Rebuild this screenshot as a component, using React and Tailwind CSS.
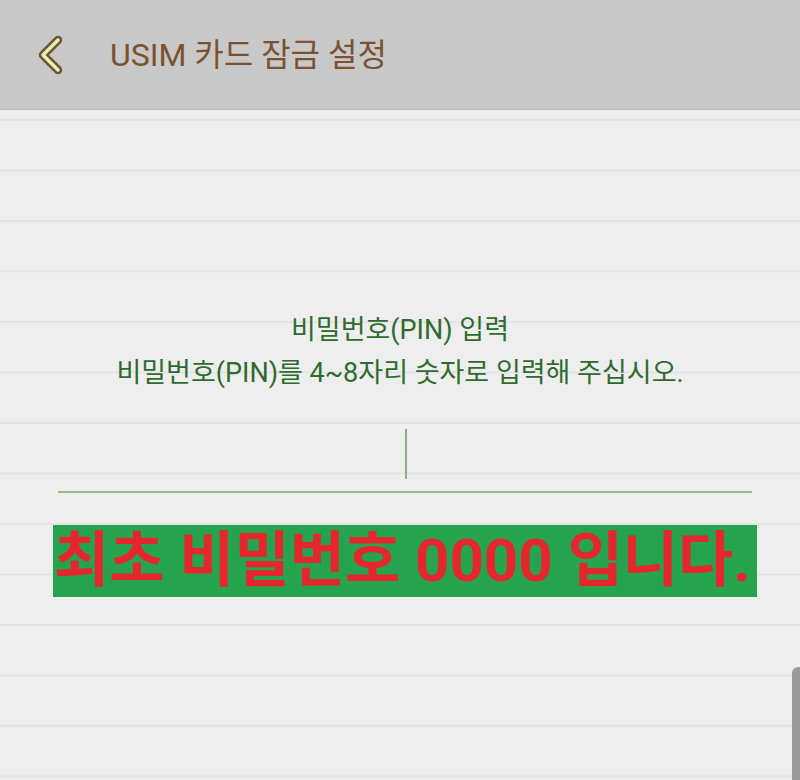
import React from 'react';

const font = { fontFamily: 'Roboto, "Noto Sans CJK KR", sans-serif' };

const BackChevron = () => (
    <svg width="34" height="40" viewBox="0 0 34 40" className="shrink-0">
        <polyline points="24,5 9,20 24,35" fill="none" stroke="#6e5433" strokeWidth="8.5" strokeLinecap="round" strokeLinejoin="round" />
        <polyline points="24,5 9,20 24,35" fill="none" stroke="#e8f1b4" strokeWidth="3.5" strokeLinecap="round" strokeLinejoin="round" />
    </svg>
);

export default function App() {
    return (
        <div className="w-[800px] h-[780px] overflow-hidden bg-[#eeeeee] relative" style={font}>
            {/* Header */}
            <div className="h-[110px] bg-[#c8c8c8] border-b border-[#bdbdbd] flex items-center pl-[34px]">
                <BackChevron />
                <h1 className="ml-[42px] text-[32px] text-[#7a5230]">USIM 카드 잠금 설정</h1>
            </div>

            {/* Body */}
            <div className="h-[670px] bg-[linear-gradient(to_bottom,transparent_0,transparent_9px,#e3e3e3_9px,#e3e3e3_11px,transparent_11px)] bg-[length:100%_50.5px]">
                <div className="pt-[199px] text-center text-[#2f6b2f] text-[27px] leading-[43px]">
                    <p>비밀번호(PIN) 입력</p>
                    <p>비밀번호(PIN)를 4~8자리 숫자로 입력해 주십시오.</p>
                </div>

                <div className="mt-[34px] flex justify-center">
                    <div className="w-[2px] h-[50px] bg-[#8db183] ml-[12px]" />
                </div>

                <div className="mt-[12px] ml-[58px] w-[694px] h-[2px] bg-[#94bd86]" />

                <div className="mt-[32px] ml-[53px] w-[704px] h-[72px] bg-[#26a34f] flex items-center overflow-visible">
                    <span className="text-[60px] font-bold text-[#e6262d] whitespace-nowrap leading-none ml-[1px]">최초 비밀번호 0000 입니다.</span>
                </div>
            </div>

            {/* Scrollbar */}
            <div className="absolute right-0 top-[667px] w-[8px] h-[113px] bg-[#9b9b9b] rounded-tl-[6px]" />
        </div>
    );
}
